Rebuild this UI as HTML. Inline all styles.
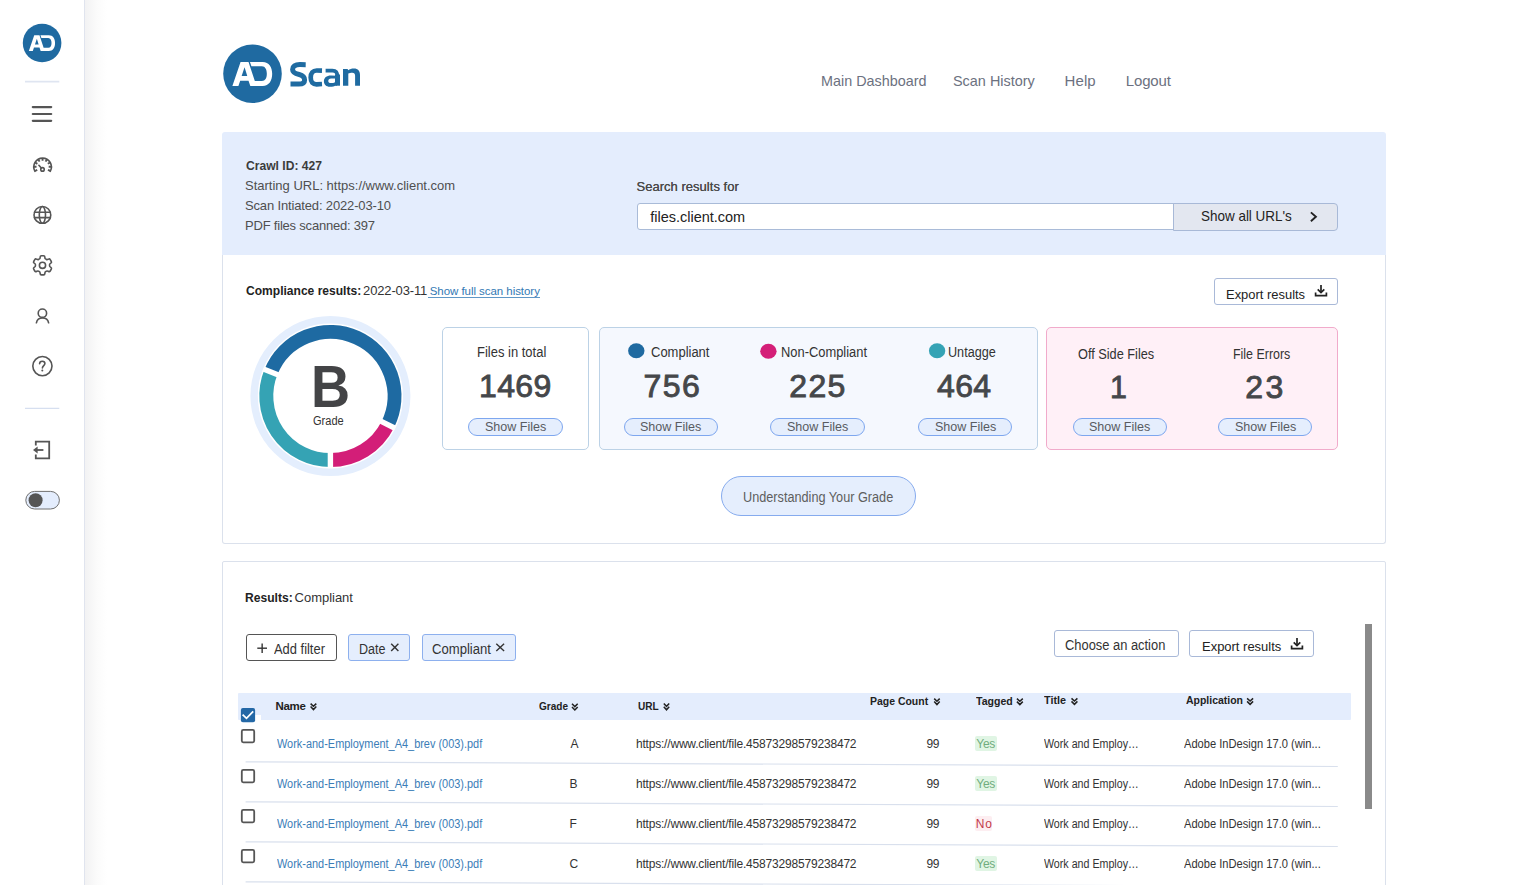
<!DOCTYPE html>
<html><head><meta charset="utf-8"><title>AD Scan</title>
<style>html,body{margin:0;padding:0;width:1536px;height:885px;overflow:hidden;background:#fff}body{position:relative;font-family:"Liberation Sans",sans-serif}</style>
</head><body>
<div style="position:absolute;left:0;top:0;width:1536px;height:885px;background:#fff"></div>
<div style="position:absolute;left:85px;top:0;width:22px;height:885px;background:linear-gradient(to right,#f2f2f3,#fbfbfb 55%,#fff)"></div>
<div style="position:absolute;left:0;top:0;width:85px;height:885px;box-sizing:border-box;background:#fff;border-right:1px solid #e0e4ee"></div>
<svg style="position:absolute;left:0;top:0" width="85" height="530" viewBox="0 0 85 530">
<circle cx="42.1" cy="43.0" r="19.3" fill="#1f6aa1"/><path fill="#fff" fill-rule="evenodd" transform="translate(20.656,22.080) scale(0.04765)" d="M172,608 L285,275 L395,275 L482,540 L580,540 C625,540 648,500 648,440 C648,380 625,335 580,335 L435,335 L415,275 L590,275 C680,275 722,345 722,440 C722,535 680,608 590,608 L420,608 L395,535 L280,535 L255,608 Z M340,350 L300,470 L378,470 Z"/>
<line x1="25" y1="81.6" x2="59.3" y2="81.6" stroke="#dfe5f1" stroke-width="1.6"/>
<g stroke="#555" stroke-width="2.2" stroke-linecap="round">
<line x1="32.8" y1="107.1" x2="51.2" y2="107.1"/><line x1="32.8" y1="114" x2="51.2" y2="114"/><line x1="32.8" y1="120.8" x2="51.2" y2="120.8"/>
</g>
<g stroke="#555" fill="none" stroke-width="1.6" stroke-linecap="round">
<path d="M34.95,171.30 A8.8,8.8 0 1 1 50.25,171.30"/>
<line x1="35.02" y1="171.01" x2="37.22" y2="169.83" stroke-width="1.9" stroke-linecap="butt"/><line x1="34.00" y1="166.75" x2="36.50" y2="166.81" stroke-width="1.9" stroke-linecap="butt"/><line x1="35.21" y1="162.55" x2="37.36" y2="163.83" stroke-width="1.9" stroke-linecap="butt"/><line x1="38.34" y1="159.48" x2="39.58" y2="161.65" stroke-width="1.9" stroke-linecap="butt"/><line x1="42.57" y1="158.35" x2="42.58" y2="160.85" stroke-width="1.9" stroke-linecap="butt"/><line x1="46.81" y1="159.45" x2="45.59" y2="161.63" stroke-width="1.9" stroke-linecap="butt"/><line x1="49.96" y1="162.49" x2="47.82" y2="163.79" stroke-width="1.9" stroke-linecap="butt"/><line x1="51.20" y1="166.69" x2="48.70" y2="166.77" stroke-width="1.9" stroke-linecap="butt"/><line x1="50.21" y1="170.96" x2="48.00" y2="169.79" stroke-width="1.9" stroke-linecap="butt"/>
<circle cx="42.5" cy="169.4" r="1.75"/>
<line x1="41.3" y1="168.0" x2="38.9" y2="165.3"/>
<circle cx="42.4" cy="214.9" r="8.4"/>
<ellipse cx="42.4" cy="214.9" rx="3.1" ry="8.4"/>
<line x1="34.4" y1="212.2" x2="50.4" y2="212.2"/><line x1="34.4" y1="217.6" x2="50.4" y2="217.6"/>
<path d="M39.51,258.89 L39.51,258.89 Q40.07,258.63 40.13,257.43 L40.15,256.97 Q40.21,255.77 41.41,255.77 L43.59,255.77 Q44.79,255.77 44.85,256.97 L44.87,257.43 Q44.93,258.63 45.49,258.89 L45.49,258.89 Q46.05,259.15 46.56,259.51 L46.56,259.51 Q47.06,259.86 48.13,259.31 L48.54,259.10 Q49.61,258.55 50.21,259.59 L51.30,261.48 Q51.90,262.52 50.89,263.17 L50.50,263.42 Q49.49,264.07 49.55,264.68 L49.55,264.68 Q49.60,265.30 49.55,265.92 L49.55,265.92 Q49.49,266.53 50.50,267.18 L50.89,267.43 Q51.90,268.08 51.30,269.12 L50.21,271.01 Q49.61,272.05 48.54,271.50 L48.13,271.29 Q47.06,270.74 46.56,271.09 L46.56,271.09 Q46.05,271.45 45.49,271.71 L45.49,271.71 Q44.93,271.97 44.87,273.17 L44.85,273.63 Q44.79,274.83 43.59,274.83 L41.41,274.83 Q40.21,274.83 40.15,273.63 L40.13,273.17 Q40.07,271.97 39.51,271.71 L39.51,271.71 Q38.95,271.45 38.44,271.09 L38.44,271.09 Q37.94,270.74 36.87,271.29 L36.46,271.50 Q35.39,272.05 34.79,271.01 L33.70,269.12 Q33.10,268.08 34.11,267.43 L34.50,267.18 Q35.51,266.53 35.45,265.92 L35.45,265.92 Q35.40,265.30 35.45,264.68 L35.45,264.68 Q35.51,264.07 34.50,263.42 L34.11,263.17 Q33.10,262.52 33.70,261.48 L34.79,259.59 Q35.39,258.55 36.46,259.10 L36.87,259.31 Q37.94,259.86 38.44,259.51 L38.44,259.51 Q38.95,259.15 39.51,258.89 Z" stroke-linejoin="round"/>
<circle cx="42.5" cy="265.3" r="3.1"/>
<circle cx="42.4" cy="313.2" r="4.2"/>
<path d="M36.4,322.8 A6.2,5.8 0 0 1 48.6,322.8"/>
<circle cx="42.4" cy="366.1" r="9.6"/>
<path d="M39.6,363.8 C39.6,361.8 41,361.2 42.3,361.2 C43.8,361.2 44.9,362.2 44.9,363.6 C44.9,365.4 42.4,366 42.4,368"/>
<line x1="42.3" y1="370.4" x2="42.3" y2="370.6" stroke-width="2"/>
</g>
<line x1="25" y1="408.4" x2="59.3" y2="408.4" stroke="#d6dff0" stroke-width="1.2"/>
<g stroke="#555" fill="none" stroke-width="1.8">
<path d="M35.8,445.6 V441.6 H49.2 V458.4 H35.8 V454.4"/>
<line x1="36" y1="450" x2="43.4" y2="450"/>
<path d="M37.6,446.4 L33.0,450 L37.6,453.6 Z" fill="#555" stroke="none"/>
</g>
<rect x="25.8" y="491.4" width="33.6" height="17.6" rx="8.8" fill="#e4edfd" stroke="#707070" stroke-width="1"/>
<circle cx="35.6" cy="500.2" r="7.0" fill="#555"/>
</svg>
<svg style="position:absolute;left:0;top:0" width="300" height="120" viewBox="0 0 300 120"><circle cx="252.5" cy="73.8" r="29.3" fill="#1f6aa1"/><path fill="#fff" fill-rule="evenodd" transform="translate(219.944,42.040) scale(0.07235)" d="M172,608 L285,275 L395,275 L482,540 L580,540 C625,540 648,500 648,440 C648,380 625,335 580,335 L435,335 L415,275 L590,275 C680,275 722,345 722,440 C722,535 680,608 590,608 L420,608 L395,535 L280,535 L255,608 Z M340,350 L300,470 L378,470 Z"/></svg>
<svg style="position:absolute;left:285px;top:55px" width="80" height="40" viewBox="285 55 80 40">
<g fill="none" stroke="#1f6ba1" stroke-linecap="butt">
<path stroke-width="5.0" d="M305.7,64.7 L300.2,64.6 C295,64.5 292.6,66.6 292.6,69.4 C292.6,72.6 295.6,73.6 299.2,74.5 C302.8,75.4 304.6,76.7 304.6,80.0 C304.6,82.9 302.4,84.1 298.8,84.1 L290.5,84.1"/>
<path stroke-width="4.7" d="M322.0,70.7 L316.9,70.5 C312.9,70.4 310.7,73.1 310.7,77.6 C310.7,82.0 312.8,84.4 316.7,84.3 L322.0,84.0"/>
<path stroke-width="3.9" d="M325.6,70.6 L332.4,70.6 C336.0,70.6 337.5,72.4 337.5,77.0"/>
</g>
<g fill="#1f6ba1">
<rect x="335.0" y="74.5" width="5.0" height="11.2"/>
<path fill-rule="evenodd" d="M336.5,75.8 L331,75.6 C326.5,75.6 323.9,77.9 323.9,81.3 C323.9,84.7 326.3,86.8 329.8,86.8 C332.6,86.8 334.6,86.1 335.8,85.2 L336.6,85.7 L337,85.7 Z M335.2,78.4 L331.1,78.4 C329.2,78.4 328.3,79.5 328.3,80.9 C328.3,82.3 329.2,83.1 330.9,83.1 C332.6,83.1 334.1,82.7 335.2,82.2 Z"/>
<path d="M343,69.0 L347.6,69.0 L348.2,70.2 C349.6,69.1 351.6,68.5 353.9,68.5 C358.1,68.5 360,70.9 360,75.0 L360,85.7 L355.1,85.7 L355.1,75.8 C355.1,73.7 354.2,72.8 352.3,72.8 C350.8,72.8 349.3,73.1 348.3,73.6 L348.3,85.7 L343,85.7 Z"/>
</g></svg>
<div style="position:absolute;left:222px;top:132px;width:1164px;height:124px;box-sizing:border-box;background:#e4edfd;border-radius:0px;border-radius:3px 3px 0 0;"></div>
<div style="position:absolute;left:636.5px;top:202.8px;width:538.5px;height:27.6px;box-sizing:border-box;background:#fff;border:1px solid #a9bbd8;border-radius:0px;border-radius:3px 0 0 3px;"></div>
<div style="position:absolute;left:1173px;top:202.6px;width:165px;height:28.0px;box-sizing:border-box;background:#e3e7f0;border:1px solid #a8b9d7;border-radius:0px;border-radius:0 4px 4px 0;"></div>
<svg style="position:absolute;left:1300px;top:205px" width="30" height="22" viewBox="1300 205 30 22"><path d="M1310.9,212.4 L1315.9,216.8 L1310.9,221.2" fill="none" stroke="#222" stroke-width="1.9"/></svg>
<div style="position:absolute;left:222px;top:255px;width:1164px;height:288.5px;box-sizing:border-box;background:#fff;border:1px solid #dbe1ec;border-radius:0px;border-top:none;border-radius:0 0 3px 3px;"></div>
<div style="position:absolute;left:427.7px;top:296.6px;width:112.1px;height:1.0px;box-sizing:border-box;background:#5f97c6;border-radius:0px;"></div>
<div style="position:absolute;left:1213.5px;top:277.6px;width:124.5px;height:27.2px;box-sizing:border-box;background:#fff;border:1px solid #a9b9d8;border-radius:3px;"></div>
<svg style="position:absolute;left:1310.5px;top:282.2px" width="20" height="18" viewBox="1310.5 282.2 20 18"><g fill="none" stroke="#222" stroke-width="1.7"><line x1="1320.5" y1="285.2" x2="1320.5" y2="292.59999999999997"/><path d="M1317.2,289.59999999999997 L1320.5,292.8 L1323.8,289.59999999999997"/><path d="M1315.1,292.59999999999997 V295.8 H1325.9 V292.59999999999997"/></g></svg>
<svg style="position:absolute;left:240px;top:306px" width="180" height="180" viewBox="240 306 180 180">
<circle cx="330.4" cy="396" r="80" fill="#e4eefd"/>
<circle cx="330.4" cy="396" r="72.6" fill="#fff"/>
<path d="M270.97,371.99 A64.1,64.1 0 1 1 387.77,424.60" fill="none" stroke="#1e6aa2" stroke-width="14"/><path d="M387.77,424.60 A64.1,64.1 0 0 1 330.40,460.10" fill="none" stroke="#d31e78" stroke-width="14"/><path d="M330.40,460.10 A64.1,64.1 0 0 1 270.97,371.99" fill="none" stroke="#35a3b4" stroke-width="14"/>
<line x1="378.73" y1="420.09" x2="395.01" y2="428.22" stroke="#fff" stroke-width="5.4"/><line x1="330.40" y1="450.00" x2="330.40" y2="468.20" stroke="#fff" stroke-width="5.4"/><line x1="280.33" y1="375.77" x2="263.46" y2="368.95" stroke="#fff" stroke-width="5.4"/>
</svg>
<div style="position:absolute;left:442px;top:327.2px;width:147px;height:122.8px;box-sizing:border-box;background:#fff;border:1px solid #bcd2e6;border-radius:5px;"></div>
<div style="position:absolute;left:468px;top:417.6px;width:94.6px;height:18.2px;box-sizing:border-box;background:#e5eefd;border:1px solid #7ea7ef;border-radius:10px;"></div>
<div style="position:absolute;left:599px;top:327.2px;width:439px;height:122.8px;box-sizing:border-box;background:#f5f8fe;border:1px solid #bcd2e6;border-radius:5px;"></div>
<svg style="position:absolute;left:600px;top:330px" width="400" height="40" viewBox="600 330 400 40"><ellipse cx="636.3" cy="350.8" rx="8.2" ry="7.5" fill="#1f6aa1"/><ellipse cx="768.4" cy="351.3" rx="8.2" ry="7.5" fill="#d41f78"/><ellipse cx="937.1" cy="350.8" rx="8.2" ry="7.5" fill="#35a3b5"/></svg>
<div style="position:absolute;left:623.5px;top:417.6px;width:94.5px;height:18.2px;box-sizing:border-box;background:#e5eefd;border:1px solid #7ea7ef;border-radius:10px;"></div>
<div style="position:absolute;left:770.3px;top:417.6px;width:94.4px;height:18.2px;box-sizing:border-box;background:#e5eefd;border:1px solid #7ea7ef;border-radius:10px;"></div>
<div style="position:absolute;left:918px;top:417.6px;width:94.4px;height:18.2px;box-sizing:border-box;background:#e5eefd;border:1px solid #7ea7ef;border-radius:10px;"></div>
<div style="position:absolute;left:1046px;top:327.2px;width:292px;height:122.8px;box-sizing:border-box;background:#fff0f7;border:1px solid #f1abcb;border-radius:5px;"></div>
<div style="position:absolute;left:1072.9px;top:417.6px;width:94.0px;height:18.2px;box-sizing:border-box;background:#e5eefd;border:1px solid #7ea7ef;border-radius:10px;"></div>
<div style="position:absolute;left:1217.9px;top:417.6px;width:94.5px;height:18.2px;box-sizing:border-box;background:#e5eefd;border:1px solid #7ea7ef;border-radius:10px;"></div>
<div style="position:absolute;left:721px;top:476px;width:195px;height:40px;box-sizing:border-box;background:#e5eefd;border:1px solid #86abee;border-radius:20px;"></div>
<div style="position:absolute;left:222px;top:561px;width:1164px;height:339px;box-sizing:border-box;background:#fff;border:1px solid #dbe1ec;border-radius:2px;"></div>
<div style="position:absolute;left:245.6px;top:633.6px;width:91.4px;height:27.0px;box-sizing:border-box;background:#fff;border:1px solid #555;border-radius:3px;"></div>
<svg style="position:absolute;left:250px;top:640px" width="20" height="16" viewBox="250 640 20 16"><g stroke="#333" stroke-width="1.4"><line x1="257.3" y1="648.2" x2="267" y2="648.2"/><line x1="262.15" y1="643.6" x2="262.15" y2="652.9"/></g></svg>
<div style="position:absolute;left:348px;top:633.6px;width:62.4px;height:27.0px;box-sizing:border-box;background:#e5eefd;border:1px solid #8db0ee;border-radius:3px;"></div>
<div style="position:absolute;left:421.6px;top:633.6px;width:94.4px;height:27.0px;box-sizing:border-box;background:#e5eefd;border:1px solid #8db0ee;border-radius:3px;"></div>
<svg style="position:absolute;left:385px;top:638px" width="130" height="18" viewBox="385 638 130 18"><g stroke="#333" stroke-width="1.4"><line x1="391.2" y1="643.8" x2="398.4" y2="651"/><line x1="398.4" y1="643.8" x2="391.2" y2="651"/><line x1="496.3" y1="643.8" x2="504.1" y2="651"/><line x1="504.1" y1="643.8" x2="496.3" y2="651"/></g></svg>
<div style="position:absolute;left:1054px;top:629.8px;width:124.6px;height:27.0px;box-sizing:border-box;background:#fff;border:1px solid #a9b9d8;border-radius:3px;"></div>
<div style="position:absolute;left:1189.4px;top:629.8px;width:124.6px;height:27.0px;box-sizing:border-box;background:#fff;border:1px solid #a9b9d8;border-radius:3px;"></div>
<svg style="position:absolute;left:1286.5px;top:634.9px" width="20" height="18" viewBox="1286.5 634.9 20 18"><g fill="none" stroke="#222" stroke-width="1.7"><line x1="1296.5" y1="637.9" x2="1296.5" y2="645.3"/><path d="M1293.2,642.3 L1296.5,645.5 L1299.8,642.3"/><path d="M1291.1,645.3 V648.5 H1301.9 V645.3"/></g></svg>
<div style="position:absolute;left:1365px;top:624px;width:7.2px;height:185px;box-sizing:border-box;background:#8a8a8a;border-radius:0px;"></div>
<div style="position:absolute;left:237.6px;top:693px;width:1113.4px;height:26.6px;box-sizing:border-box;background:#e4edfd;border-radius:1px;"></div>
<div style="position:absolute;left:255px;top:715px;width:6px;height:4.6px;box-sizing:border-box;background:#fff;border-radius:0px;"></div>
<svg style="position:absolute;left:238px;top:705px" width="22" height="20" viewBox="238 705 22 20"><rect x="240.9" y="708" width="14.2" height="14.2" rx="2" fill="#2468a6"/><path d="M242.6,714.6 L246.5,718.3 L253.2,711.4" fill="none" stroke="#fff" stroke-width="1.8"/></svg>
<svg style="position:absolute;left:0;top:0" width="1536" height="885" viewBox="0 0 1536 885"><g fill="none" stroke="#222" stroke-width="1.5"><path d="M310.60,703.60 L313.45,706.30 L316.30,703.60 M310.60,706.60 L313.45,709.60 L316.30,706.60"/><path d="M572.00,703.80 L574.85,706.59 L577.70,703.80 M572.00,706.90 L574.85,710.00 L577.70,706.90"/><path d="M663.80,703.60 L666.50,706.39 L669.20,703.60 M663.80,706.70 L666.50,709.80 L669.20,706.70"/><path d="M934.20,698.60 L936.95,701.30 L939.70,698.60 M934.20,701.60 L936.95,704.60 L939.70,701.60"/><path d="M1016.90,698.60 L1019.85,701.30 L1022.80,698.60 M1016.90,701.60 L1019.85,704.60 L1022.80,701.60"/><path d="M1071.50,698.40 L1074.45,701.10 L1077.40,698.40 M1071.50,701.40 L1074.45,704.40 L1077.40,701.40"/><path d="M1247.10,698.40 L1250.10,701.10 L1253.10,698.40 M1247.10,701.40 L1250.10,704.40 L1253.10,701.40"/></g></svg>
<div style="position:absolute;left:975.2px;top:736.2px;width:21.5px;height:14.4px;box-sizing:border-box;background:#e0f5e4;border-radius:2px;"></div>
<div style="position:absolute;left:975.2px;top:776.2px;width:21.5px;height:14.4px;box-sizing:border-box;background:#e0f5e4;border-radius:2px;"></div>
<div style="position:absolute;left:974.7px;top:816.2px;width:17.8px;height:14.4px;box-sizing:border-box;background:#fdeef1;border-radius:2px;"></div>
<div style="position:absolute;left:975.2px;top:856.2px;width:21.5px;height:14.4px;box-sizing:border-box;background:#e0f5e4;border-radius:2px;"></div>
<svg style="position:absolute;left:0;top:0" width="1536" height="885" viewBox="0 0 1536 885"><rect x="241.8" y="729.9" width="12.4" height="12.4" rx="1.5" fill="#fff" stroke="#555" stroke-width="1.8"/><rect x="241.8" y="769.9" width="12.4" height="12.4" rx="1.5" fill="#fff" stroke="#555" stroke-width="1.8"/><rect x="241.8" y="809.9" width="12.4" height="12.4" rx="1.5" fill="#fff" stroke="#555" stroke-width="1.8"/><rect x="241.8" y="849.9" width="12.4" height="12.4" rx="1.5" fill="#fff" stroke="#555" stroke-width="1.8"/><g stroke="#d9e0ed" stroke-width="1.2"><line x1="245.6" y1="761.8" x2="1337.8" y2="766.5"/><line x1="245.6" y1="801.8" x2="1337.8" y2="806.5"/><line x1="245.6" y1="841.8" x2="1337.8" y2="846.5"/><line x1="245.6" y1="881.8" x2="1337.8" y2="886.5"/></g></svg>
<div style="position:absolute;left:821.44px;top:72.55px;font-size:15px;line-height:15px;font-weight:400;color:#6c7180;letter-spacing:0.000px;white-space:pre;transform:scaleX(0.9583);transform-origin:0 0;">Main Dashboard</div>
<div style="position:absolute;left:953.44px;top:72.55px;font-size:15px;line-height:15px;font-weight:400;color:#6c7180;letter-spacing:0.000px;white-space:pre;transform:scaleX(0.9619);transform-origin:0 0;">Scan History</div>
<div style="position:absolute;left:1064.60px;top:72.55px;font-size:15px;line-height:15px;font-weight:400;color:#6c7180;letter-spacing:0.067px;white-space:pre;">Help</div>
<div style="position:absolute;left:1125.80px;top:72.55px;font-size:15px;line-height:15px;font-weight:400;color:#6c7180;letter-spacing:-0.160px;white-space:pre;">Logout</div>
<div style="position:absolute;left:246.00px;top:158.95px;font-size:13px;line-height:13px;font-weight:700;color:#3b3b3b;letter-spacing:0.000px;white-space:pre;transform:scaleX(0.9309);transform-origin:0 0;">Crawl ID: 427</div>
<div style="position:absolute;left:245.00px;top:179.05px;font-size:13px;line-height:13px;font-weight:400;color:#4f4f4f;letter-spacing:-0.003px;white-space:pre;">Starting URL: https://www.client.com</div>
<div style="position:absolute;left:245.00px;top:199.15px;font-size:13px;line-height:13px;font-weight:400;color:#4f4f4f;letter-spacing:-0.150px;white-space:pre;">Scan Intiated: 2022-03-10</div>
<div style="position:absolute;left:245.00px;top:219.15px;font-size:13px;line-height:13px;font-weight:400;color:#4f4f4f;letter-spacing:-0.205px;white-space:pre;">PDF files scanned: 397</div>
<div style="position:absolute;left:636.50px;top:180.05px;font-size:13px;line-height:13px;font-weight:400;color:#4a4a4a;letter-spacing:0.024px;white-space:pre;text-shadow:0 0 0.2px #4a4a4a;">Search results for</div>
<div style="position:absolute;left:650.30px;top:210.08px;font-size:14.5px;line-height:14.5px;font-weight:400;color:#222;letter-spacing:-0.013px;white-space:pre;">files.client.com</div>
<div style="position:absolute;left:1201.00px;top:208.45px;font-size:15px;line-height:15px;font-weight:400;color:#222;letter-spacing:0.000px;white-space:pre;transform:scaleX(0.8970);transform-origin:0 0;">Show all URL&#x27;s</div>
<div style="position:absolute;left:246.00px;top:284.15px;font-size:13px;line-height:13px;font-weight:700;color:#222;letter-spacing:0.000px;white-space:pre;transform:scaleX(0.9268);transform-origin:0 0;">Compliance results:</div>
<div style="position:absolute;left:363.10px;top:284.15px;font-size:13px;line-height:13px;font-weight:400;color:#333;letter-spacing:-0.156px;white-space:pre;">2022-03-11</div>
<div style="position:absolute;left:429.70px;top:286.12px;font-size:11.5px;line-height:11.5px;font-weight:400;color:#3279b4;letter-spacing:-0.048px;white-space:pre;">Show full scan history</div>
<div style="position:absolute;left:1225.84px;top:287.72px;font-size:13.5px;line-height:13.5px;font-weight:400;color:#222;letter-spacing:0.000px;white-space:pre;transform:scaleX(0.9580);transform-origin:0 0;">Export results</div>
<div style="position:absolute;left:311.33px;top:357.85px;font-size:59px;line-height:59px;font-weight:700;color:#434446;letter-spacing:0.000px;white-space:pre;transform:scaleX(0.9167);transform-origin:0 0;">B</div>
<div style="position:absolute;left:312.88px;top:415.20px;font-size:12px;line-height:12px;font-weight:400;color:#333;letter-spacing:0.000px;white-space:pre;transform:scaleX(0.9187);transform-origin:0 0;">Grade</div>
<div style="position:absolute;left:476.87px;top:345.20px;font-size:14px;line-height:14px;font-weight:400;color:#333;letter-spacing:0.000px;white-space:pre;transform:scaleX(0.9274);transform-origin:0 0;">Files in total</div>
<div style="position:absolute;left:479.10px;top:370.30px;font-size:32px;line-height:32px;font-weight:400;color:#45474a;letter-spacing:0.300px;white-space:pre;-webkit-text-stroke:0.9px #45474a;">1469</div>
<div style="position:absolute;left:484.67px;top:419.82px;font-size:13.5px;line-height:13.5px;font-weight:400;color:#585b61;letter-spacing:0.000px;white-space:pre;transform:scaleX(0.9292);transform-origin:0 0;">Show Files</div>
<div style="position:absolute;left:650.77px;top:345.10px;font-size:14px;line-height:14px;font-weight:400;color:#333;letter-spacing:0.000px;white-space:pre;transform:scaleX(0.9274);transform-origin:0 0;">Compliant</div>
<div style="position:absolute;left:780.68px;top:345.10px;font-size:14px;line-height:14px;font-weight:400;color:#333;letter-spacing:0.000px;white-space:pre;transform:scaleX(0.9207);transform-origin:0 0;">Non-Compliant</div>
<div style="position:absolute;left:948.40px;top:345.10px;font-size:14px;line-height:14px;font-weight:400;color:#333;letter-spacing:0.000px;white-space:pre;transform:scaleX(0.9019);transform-origin:0 0;">Untagge</div>
<div style="position:absolute;left:643.40px;top:370.30px;font-size:32px;line-height:32px;font-weight:400;color:#45474a;letter-spacing:1.500px;white-space:pre;-webkit-text-stroke:0.9px #45474a;">756</div>
<div style="position:absolute;left:789.30px;top:370.30px;font-size:32px;line-height:32px;font-weight:400;color:#45474a;letter-spacing:1.350px;white-space:pre;-webkit-text-stroke:0.9px #45474a;">225</div>
<div style="position:absolute;left:937.00px;top:370.30px;font-size:32px;line-height:32px;font-weight:400;color:#45474a;letter-spacing:0.350px;white-space:pre;-webkit-text-stroke:0.9px #45474a;">464</div>
<div style="position:absolute;left:640.12px;top:419.82px;font-size:13.5px;line-height:13.5px;font-weight:400;color:#585b61;letter-spacing:0.000px;white-space:pre;transform:scaleX(0.9292);transform-origin:0 0;">Show Files</div>
<div style="position:absolute;left:786.87px;top:419.82px;font-size:13.5px;line-height:13.5px;font-weight:400;color:#585b61;letter-spacing:0.000px;white-space:pre;transform:scaleX(0.9292);transform-origin:0 0;">Show Files</div>
<div style="position:absolute;left:934.57px;top:419.82px;font-size:13.5px;line-height:13.5px;font-weight:400;color:#585b61;letter-spacing:0.000px;white-space:pre;transform:scaleX(0.9292);transform-origin:0 0;">Show Files</div>
<div style="position:absolute;left:1077.79px;top:346.90px;font-size:14px;line-height:14px;font-weight:400;color:#333;letter-spacing:0.000px;white-space:pre;transform:scaleX(0.9098);transform-origin:0 0;">Off Side Files</div>
<div style="position:absolute;left:1233.41px;top:346.90px;font-size:14px;line-height:14px;font-weight:400;color:#333;letter-spacing:0.000px;white-space:pre;transform:scaleX(0.8873);transform-origin:0 0;">File Errors</div>
<div style="position:absolute;left:1110.00px;top:370.60px;font-size:32px;line-height:32px;font-weight:400;color:#45474a;letter-spacing:0.000px;white-space:pre;transform:scaleX(0.9500);transform-origin:0 0;-webkit-text-stroke:0.9px #45474a;">1</div>
<div style="position:absolute;left:1245.30px;top:370.60px;font-size:32px;line-height:32px;font-weight:400;color:#45474a;letter-spacing:2.400px;white-space:pre;-webkit-text-stroke:0.9px #45474a;">23</div>
<div style="position:absolute;left:1089.27px;top:419.82px;font-size:13.5px;line-height:13.5px;font-weight:400;color:#585b61;letter-spacing:0.000px;white-space:pre;transform:scaleX(0.9292);transform-origin:0 0;">Show Files</div>
<div style="position:absolute;left:1234.52px;top:419.82px;font-size:13.5px;line-height:13.5px;font-weight:400;color:#585b61;letter-spacing:0.000px;white-space:pre;transform:scaleX(0.9292);transform-origin:0 0;">Show Files</div>
<div style="position:absolute;left:742.89px;top:490.00px;font-size:14px;line-height:14px;font-weight:400;color:#5e5e5e;letter-spacing:0.000px;white-space:pre;transform:scaleX(0.9061);transform-origin:0 0;">Understanding Your Grade</div>
<div style="position:absolute;left:245.47px;top:590.75px;font-size:13px;line-height:13px;font-weight:700;color:#222;letter-spacing:0.000px;white-space:pre;transform:scaleX(0.9306);transform-origin:0 0;">Results:</div>
<div style="position:absolute;left:294.60px;top:590.75px;font-size:13px;line-height:13px;font-weight:400;color:#333;letter-spacing:-0.025px;white-space:pre;">Compliant</div>
<div style="position:absolute;left:274.10px;top:642.00px;font-size:14px;line-height:14px;font-weight:400;color:#333;letter-spacing:0.000px;white-space:pre;transform:scaleX(0.9218);transform-origin:0 0;">Add filter</div>
<div style="position:absolute;left:358.90px;top:642.00px;font-size:14px;line-height:14px;font-weight:400;color:#333;letter-spacing:0.000px;white-space:pre;transform:scaleX(0.8964);transform-origin:0 0;">Date</div>
<div style="position:absolute;left:432.26px;top:642.00px;font-size:14px;line-height:14px;font-weight:400;color:#333;letter-spacing:0.000px;white-space:pre;transform:scaleX(0.9355);transform-origin:0 0;">Compliant</div>
<div style="position:absolute;left:1064.78px;top:637.80px;font-size:14px;line-height:14px;font-weight:400;color:#333;letter-spacing:0.000px;white-space:pre;transform:scaleX(0.9206);transform-origin:0 0;">Choose an action</div>
<div style="position:absolute;left:1201.74px;top:639.92px;font-size:13.5px;line-height:13.5px;font-weight:400;color:#222;letter-spacing:0.000px;white-space:pre;transform:scaleX(0.9605);transform-origin:0 0;">Export results</div>
<div style="position:absolute;left:275.50px;top:700.52px;font-size:11.5px;line-height:11.5px;font-weight:700;color:#222;letter-spacing:-0.333px;white-space:pre;">Name</div>
<div style="position:absolute;left:538.80px;top:701.23px;font-size:11.5px;line-height:11.5px;font-weight:700;color:#222;letter-spacing:0.000px;white-space:pre;transform:scaleX(0.8727);transform-origin:0 0;">Grade</div>
<div style="position:absolute;left:637.72px;top:700.73px;font-size:11.5px;line-height:11.5px;font-weight:700;color:#222;letter-spacing:0.000px;white-space:pre;transform:scaleX(0.8773);transform-origin:0 0;">URL</div>
<div style="position:absolute;left:869.79px;top:695.73px;font-size:11.5px;line-height:11.5px;font-weight:700;color:#222;letter-spacing:0.000px;white-space:pre;transform:scaleX(0.9095);transform-origin:0 0;">Page Count</div>
<div style="position:absolute;left:975.90px;top:695.73px;font-size:11.5px;line-height:11.5px;font-weight:700;color:#222;letter-spacing:0.000px;white-space:pre;transform:scaleX(0.9179);transform-origin:0 0;">Tagged</div>
<div style="position:absolute;left:1044.20px;top:695.43px;font-size:11.5px;line-height:11.5px;font-weight:700;color:#222;letter-spacing:0.000px;white-space:pre;transform:scaleX(0.9391);transform-origin:0 0;">Title</div>
<div style="position:absolute;left:1185.80px;top:695.43px;font-size:11.5px;line-height:11.5px;font-weight:700;color:#222;letter-spacing:0.000px;white-space:pre;transform:scaleX(0.9097);transform-origin:0 0;">Application</div>
<div style="position:absolute;left:276.50px;top:738.20px;font-size:12px;line-height:12px;font-weight:400;color:#3b7db7;letter-spacing:0.000px;white-space:pre;transform:scaleX(0.9111);transform-origin:0 0;">Work-and-Employment_A4_brev (003).pdf</div>
<div style="position:absolute;left:570.60px;top:738.20px;font-size:12px;line-height:12px;font-weight:400;color:#333;letter-spacing:0.000px;white-space:pre;">A</div>
<div style="position:absolute;left:635.90px;top:738.20px;font-size:12px;line-height:12px;font-weight:400;color:#333;letter-spacing:-0.188px;white-space:pre;">https://www.client/file.45873298579238472</div>
<div style="position:absolute;left:926.40px;top:738.20px;font-size:12px;line-height:12px;font-weight:400;color:#333;letter-spacing:-0.200px;white-space:pre;">99</div>
<div style="position:absolute;left:976.20px;top:738.20px;font-size:12px;line-height:12px;font-weight:400;color:#70ad7d;letter-spacing:-0.200px;white-space:pre;">Yes</div>
<div style="position:absolute;left:1043.50px;top:738.20px;font-size:12px;line-height:12px;font-weight:400;color:#333;letter-spacing:0.000px;white-space:pre;transform:scaleX(0.8886);transform-origin:0 0;">Work and Employ…</div>
<div style="position:absolute;left:1184.00px;top:738.20px;font-size:12px;line-height:12px;font-weight:400;color:#333;letter-spacing:0.000px;white-space:pre;transform:scaleX(0.9274);transform-origin:0 0;">Adobe InDesign 17.0 (win...</div>
<div style="position:absolute;left:276.50px;top:778.20px;font-size:12px;line-height:12px;font-weight:400;color:#3b7db7;letter-spacing:0.000px;white-space:pre;transform:scaleX(0.9111);transform-origin:0 0;">Work-and-Employment_A4_brev (003).pdf</div>
<div style="position:absolute;left:569.60px;top:778.20px;font-size:12px;line-height:12px;font-weight:400;color:#333;letter-spacing:0.000px;white-space:pre;">B</div>
<div style="position:absolute;left:635.90px;top:778.20px;font-size:12px;line-height:12px;font-weight:400;color:#333;letter-spacing:-0.188px;white-space:pre;">https://www.client/file.45873298579238472</div>
<div style="position:absolute;left:926.40px;top:778.20px;font-size:12px;line-height:12px;font-weight:400;color:#333;letter-spacing:-0.200px;white-space:pre;">99</div>
<div style="position:absolute;left:976.20px;top:778.20px;font-size:12px;line-height:12px;font-weight:400;color:#70ad7d;letter-spacing:-0.200px;white-space:pre;">Yes</div>
<div style="position:absolute;left:1043.50px;top:778.20px;font-size:12px;line-height:12px;font-weight:400;color:#333;letter-spacing:0.000px;white-space:pre;transform:scaleX(0.8886);transform-origin:0 0;">Work and Employ…</div>
<div style="position:absolute;left:1184.00px;top:778.20px;font-size:12px;line-height:12px;font-weight:400;color:#333;letter-spacing:0.000px;white-space:pre;transform:scaleX(0.9274);transform-origin:0 0;">Adobe InDesign 17.0 (win...</div>
<div style="position:absolute;left:276.50px;top:818.20px;font-size:12px;line-height:12px;font-weight:400;color:#3b7db7;letter-spacing:0.000px;white-space:pre;transform:scaleX(0.9111);transform-origin:0 0;">Work-and-Employment_A4_brev (003).pdf</div>
<div style="position:absolute;left:569.60px;top:818.20px;font-size:12px;line-height:12px;font-weight:400;color:#333;letter-spacing:0.000px;white-space:pre;">F</div>
<div style="position:absolute;left:635.90px;top:818.20px;font-size:12px;line-height:12px;font-weight:400;color:#333;letter-spacing:-0.188px;white-space:pre;">https://www.client/file.45873298579238472</div>
<div style="position:absolute;left:926.40px;top:818.20px;font-size:12px;line-height:12px;font-weight:400;color:#333;letter-spacing:-0.200px;white-space:pre;">99</div>
<div style="position:absolute;left:975.70px;top:818.20px;font-size:12px;line-height:12px;font-weight:400;color:#c23a4b;letter-spacing:0.900px;white-space:pre;">No</div>
<div style="position:absolute;left:1043.50px;top:818.20px;font-size:12px;line-height:12px;font-weight:400;color:#333;letter-spacing:0.000px;white-space:pre;transform:scaleX(0.8886);transform-origin:0 0;">Work and Employ…</div>
<div style="position:absolute;left:1184.00px;top:818.20px;font-size:12px;line-height:12px;font-weight:400;color:#333;letter-spacing:0.000px;white-space:pre;transform:scaleX(0.9274);transform-origin:0 0;">Adobe InDesign 17.0 (win...</div>
<div style="position:absolute;left:276.50px;top:858.20px;font-size:12px;line-height:12px;font-weight:400;color:#3b7db7;letter-spacing:0.000px;white-space:pre;transform:scaleX(0.9111);transform-origin:0 0;">Work-and-Employment_A4_brev (003).pdf</div>
<div style="position:absolute;left:569.60px;top:858.20px;font-size:12px;line-height:12px;font-weight:400;color:#333;letter-spacing:0.000px;white-space:pre;">C</div>
<div style="position:absolute;left:635.90px;top:858.20px;font-size:12px;line-height:12px;font-weight:400;color:#333;letter-spacing:-0.188px;white-space:pre;">https://www.client/file.45873298579238472</div>
<div style="position:absolute;left:926.40px;top:858.20px;font-size:12px;line-height:12px;font-weight:400;color:#333;letter-spacing:-0.200px;white-space:pre;">99</div>
<div style="position:absolute;left:976.20px;top:858.20px;font-size:12px;line-height:12px;font-weight:400;color:#70ad7d;letter-spacing:-0.200px;white-space:pre;">Yes</div>
<div style="position:absolute;left:1043.50px;top:858.20px;font-size:12px;line-height:12px;font-weight:400;color:#333;letter-spacing:0.000px;white-space:pre;transform:scaleX(0.8886);transform-origin:0 0;">Work and Employ…</div>
<div style="position:absolute;left:1184.00px;top:858.20px;font-size:12px;line-height:12px;font-weight:400;color:#333;letter-spacing:0.000px;white-space:pre;transform:scaleX(0.9274);transform-origin:0 0;">Adobe InDesign 17.0 (win...</div>
</body></html>
